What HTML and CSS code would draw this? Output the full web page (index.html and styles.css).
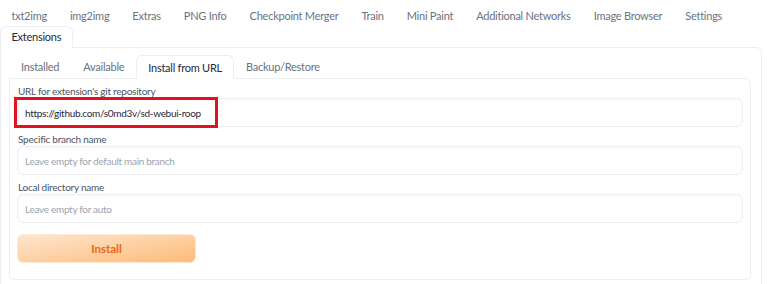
FILE: index.html
```html
<!DOCTYPE html>
<html lang="en">
<head>
    <meta charset="UTF-8">
    <title>Extensions</title>
    <link rel="stylesheet" href="styles.css">
</head>
<body>
<div class="app">
    <div class="tab-nav">
        <button class="tab">txt2img</button>
        <button class="tab">img2img</button>
        <button class="tab">Extras</button>
        <button class="tab">PNG Info</button>
        <button class="tab">Checkpoint Merger</button>
        <button class="tab">Train</button>
        <button class="tab">Mini Paint</button>
        <button class="tab">Additional Networks</button>
        <button class="tab">Image Browser</button>
        <button class="tab">Settings</button>
        <button class="tab selected">Extensions</button>
    </div>
    <div class="tab-panel">
        <div class="tab-nav sub-nav">
            <button class="tab">Installed</button>
            <button class="tab">Available</button>
            <button class="tab selected">Install from URL</button>
            <button class="tab">Backup/Restore</button>
        </div>
        <div class="sub-panel">
            <label class="field">
                <span class="field-label">URL for extension's git repository</span>
                <input class="text-input" type="text" value="https://github.com/s0md3v/sd-webui-roop">
            </label>
            <label class="field">
                <span class="field-label">Specific branch name</span>
                <input class="text-input" type="text" placeholder="Leave empty for default main branch">
            </label>
            <label class="field">
                <span class="field-label">Local directory name</span>
                <input class="text-input" type="text" placeholder="Leave empty for auto">
            </label>
            <div class="actions">
                <button class="btn-install">Install</button>
            </div>
            <!-- annotation box drawn over the url field -->
            <div class="highlight"></div>
        </div>
    </div>
</div>
</body>
</html>
```

FILE: styles.css
```css
body {
    margin: 0;
    background: #fff;
    font-family: "Lato", "Noto Sans", sans-serif;
    color: #374151;
}
.app {
    width: 768px;
    height: 284px;
    overflow: hidden;
}
.tab-nav {
    display: flex;
    flex-wrap: wrap;
    padding-top: 5px;
}
.tab {
    font: 11px/14px "Lato", sans-serif;
    letter-spacing: -0.25px;
    color: #6b7280;
    background: none;
    border: 1px solid transparent;
    border-bottom: none;
    border-radius: 6px 6px 0 0;
    padding: 3px 10.5px 4px;
    margin: 0;
    cursor: pointer;
}
.tab.selected {
    color: #1f2937;
    border-color: #eceef1;
    background: #fff;
    margin-bottom: -1px;
    position: relative;
    z-index: 1;
}
.tab-nav .tab.selected:last-child {
    margin-top: -1px;
}
.tab-panel {
    border: 1px solid #eceef1;
    border-radius: 0 6px 6px 6px;
    margin-right: 6px;
    padding: 7px 10px 8px 8px;
    height: 300px;
}
.sub-nav {
    padding-top: 0;
}
.sub-nav .tab {
    padding: 4px 11px;
}
.sub-nav .tab.selected:last-child {
    margin-top: 0;
}
.sub-panel {
    position: relative;
    border: 1px solid #eceef1;
    border-radius: 0 6px 6px 6px;
    padding: 5px 7px 16px;
    display: flex;
    flex-direction: column;
}
.field {
    display: flex;
    flex-direction: column;
    margin-bottom: 5px;
}
.field-label {
    font-size: 10px;
    line-height: 14px;
    letter-spacing: -0.25px;
    color: #4b5563;
    padding-left: 1px;
}
.text-input {
    height: 29px;
    box-sizing: border-box;
    border: 1px solid #eceef1;
    border-radius: 6px;
    box-shadow: inset 0 1px 2px rgba(0, 0, 0, 0.03);
    padding: 0 7px;
    font: 10px "Lato", sans-serif;
    letter-spacing: -0.3px;
    color: #1f2937;
    background: #fff;
    outline: none;
}
.text-input::placeholder {
    color: #9ca3af;
}
.actions {
    padding-top: 6px;
}
.btn-install {
    width: 179px;
    height: 29px;
    border: 1px solid #fde9d6;
    border-radius: 6px;
    background: linear-gradient(to bottom right, #fee6cf, #fdbb78);
    color: #ee6417;
    font: bold 11.5px "Lato", sans-serif;
    cursor: pointer;
}
.highlight {
    position: absolute;
    left: 4px;
    top: 18px;
    width: 198px;
    height: 25px;
    border: 3px solid #e5101f;
}
```
